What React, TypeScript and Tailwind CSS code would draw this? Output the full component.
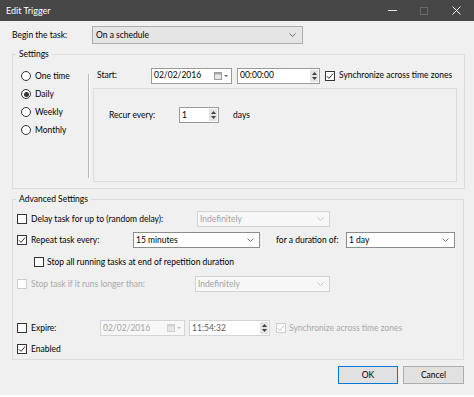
import React from "react"

function Check({ checked = false, disabled = false }: { checked?: boolean; disabled?: boolean }) {
  return (
    <span
      className={`flex h-[10px] w-[10px] shrink-0 items-center justify-center border bg-white ${
        disabled ? "border-[#cccccc]" : "border-[#333333]"
      }`}
    >
      {checked && (
        <svg width="8" height="8" viewBox="0 0 8 8">
          <path d="M0.8 4.2 L3 6.4 L7.2 1.4" fill="none" stroke={disabled ? "#bcbcbc" : "#333"} strokeWidth="1" />
        </svg>
      )}
    </span>
  )
}

function Radio({ checked = false }: { checked?: boolean }) {
  return (
    <span className="flex h-[10px] w-[10px] shrink-0 items-center justify-center rounded-full border border-[#333333] bg-white">
      {checked && <span className="h-[5px] w-[5px] rounded-full bg-[#333333]" />}
    </span>
  )
}

function Chevron({ color = "#707070" }: { color?: string }) {
  return (
    <svg width="7" height="4" viewBox="0 0 7 4" className="shrink-0">
      <path d="M0.5 0.5 L3.5 3.5 L6.5 0.5" fill="none" stroke={color} strokeWidth="1" />
    </svg>
  )
}

function Combo({ text, w, kind }: { text: string; w: string; kind: "button" | "edit" | "disabled" }) {
  const box =
    kind === "button"
      ? "bg-[#e5e5e5] border-[#acacac]"
      : kind === "edit"
      ? "bg-white border-[#8c8c8c]"
      : "bg-[#f7f7f7] border-[#d4d4d4] text-[#a3a3a3]"
  return (
    <div className={`flex h-[16px] shrink-0 items-center justify-between border pl-[2px] pr-[5px] ${box} ${w}`}>
      <span>{text}</span>
      <Chevron color={kind === "disabled" ? "#c2c2c2" : "#707070"} />
    </div>
  )
}

function Spinner({ disabled = false }: { disabled?: boolean }) {
  const c = disabled ? "#b0b0b0" : "#404040"
  return (
    <span className="flex h-[12px] w-[8px] shrink-0 flex-col items-center justify-center gap-[2px] bg-[#e3e3e3]">
      <svg width="5" height="3" viewBox="0 0 5 3">
        <path d="M0 3 L2.5 0 L5 3 Z" fill={c} />
      </svg>
      <svg width="5" height="3" viewBox="0 0 5 3">
        <path d="M0 0 L2.5 3 L5 0 Z" fill={c} />
      </svg>
    </span>
  )
}

function DateBox({ w, disabled = false }: { w: string; disabled?: boolean }) {
  return (
    <div
      className={`flex h-[16px] shrink-0 items-center justify-between border pl-[2px] pr-[3px] ${w} ${
        disabled ? "border-[#d4d4d4] bg-[#f7f7f7] text-[#a3a3a3]" : "border-[#9a9a9a] bg-white"
      }`}
    >
      <span>02/02/2016</span>
      <span className="flex items-center gap-[2px]">
        <svg width="8" height="8" viewBox="0 0 8 8">
          <rect x="0.5" y="0.5" width="7" height="7" fill="#e8e8e8" stroke={disabled ? "#cfcfcf" : "#9c9c9c"} />
          <rect x="1" y="1" width="6" height="1.5" fill={disabled ? "#d0d0d0" : "#a8a8a8"} />
        </svg>
        <svg width="4" height="2" viewBox="0 0 4 2">
          <path d="M0 0 L2 2 L4 0 Z" fill={disabled ? "#c0c0c0" : "#606060"} />
        </svg>
      </span>
    </div>
  )
}

function TimeBox({ text, w, disabled = false }: { text: string; w: string; disabled?: boolean }) {
  return (
    <div
      className={`flex h-[16px] shrink-0 items-center justify-between border pl-[2px] pr-[1px] ${w} ${
        disabled ? "border-[#d4d4d4] bg-white text-[#5a5a5a]" : "border-[#9a9a9a] bg-white"
      }`}
    >
      <span>{text}</span>
      <Spinner />
    </div>
  )
}

export default function App() {
  return (
    <div className="h-[397px] w-[474px] bg-white font-['Lato','Liberation_Sans',sans-serif] text-[8.5px] leading-none text-black">
      <div className="flex h-[395px] flex-col bg-[#f0f0f0]">
        {/* title bar */}
        <div className="flex h-[21px] shrink-0 items-center bg-[#474747] pl-[6px] text-[9px] text-white">
          <span className="flex-1">Edit Trigger</span>
          <div className="flex items-center pr-[2px]">
            <span className="flex h-[21px] w-[32px] items-center justify-center">
              <span className="h-px w-[9px] bg-[#e0e0e0]" />
            </span>
            <span className="flex h-[21px] w-[32px] items-center justify-center">
              <span className="h-[8px] w-[8px] border border-[#6c6c6c]" />
            </span>
            <span className="flex h-[21px] w-[32px] items-center justify-center">
              <svg width="9" height="9" viewBox="0 0 9 9">
                <path d="M0.5 0.5 L8.5 8.5 M8.5 0.5 L0.5 8.5" stroke="#ffffff" strokeWidth="1" />
              </svg>
            </span>
          </div>
        </div>

        {/* begin the task */}
        <div className="mt-[5px] flex h-[18px] items-center pl-[12px]">
          <span className="w-[80px]">Begin the task:</span>
          <div className="flex h-[18px] w-[211px] items-center justify-between border border-[#acacac] bg-[#e5e5e5] pl-[3px] pr-[6px]">
            <span>On a schedule</span>
            <Chevron />
          </div>
        </div>

        {/* settings */}
        <fieldset className="ml-[12px] mt-[2px] w-[453px] border border-[#dcdcdc]">
          <legend className="ml-[3px] px-[3px] leading-[16px]">Settings</legend>
          <div className="flex">
            <div className="flex w-[75px] flex-col pl-[8px] pt-[5px]">
              {[
                ["One time", false],
                ["Daily", true],
                ["Weekly", false],
                ["Monthly", false],
              ].map(([label, on]) => (
                <label key={label as string} className="flex h-[18px] items-center gap-[4px]">
                  <Radio checked={on as boolean} />
                  <span>{label}</span>
                </label>
              ))}
            </div>
            <div className="mt-[12px] h-[104px] w-[2px] border-l border-r border-l-[#b9b9b9] border-r-white" />
            <div className="ml-[3px] flex flex-col pb-[6px] pt-[5px]">
              <div className="flex h-[17px] items-center pl-[4px]">
                <span className="w-[54px]">Start:</span>
                <DateBox w="w-[81px]" />
                <div className="ml-[5px]">
                  <TimeBox text="00:00:00" w="w-[83px]" />
                </div>
                <span className="ml-[5px]">
                  <Check checked />
                </span>
                <span className="ml-[4px]">Synchronize across time zones</span>
              </div>
              <div className="mt-[4px] h-[94px] w-[364px] border border-[#dcdcdc] pl-[15px] pt-[18px]">
                <div className="flex h-[16px] items-center">
                  <span className="w-[70px]">Recur every:</span>
                  <div className="flex h-[16px] w-[40px] items-center justify-between border border-[#9a9a9a] bg-white pl-[2px] pr-[1px]">
                    <span>1</span>
                    <Spinner />
                  </div>
                  <span className="ml-[14px]">days</span>
                </div>
              </div>
            </div>
          </div>
        </fieldset>

        {/* advanced settings */}
        <fieldset className="ml-[12px] mt-[2px] w-[452px] border border-[#dcdcdc]">
          <legend className="ml-[3px] px-[3px] leading-[16px]">Advanced Settings</legend>
          <div className="flex flex-col pb-[1px] pl-[4px] pt-[3px]">
            <div className="flex h-[18px] items-center">
              <label className="flex w-[180px] items-center gap-[4px]">
                <Check />
                <span>Delay task for up to (random delay):</span>
              </label>
              <Combo text="Indefinitely" w="w-[133px]" kind="disabled" />
            </div>
            <div className="mt-[3px] flex h-[18px] items-center">
              <label className="flex w-[116px] items-center gap-[4px]">
                <Check checked />
                <span>Repeat task every:</span>
              </label>
              <Combo text="15 minutes" w="w-[127px]" kind="edit" />
              <span className="ml-[16px] w-[70px]">for a duration of:</span>
              <Combo text="1 day" w="w-[109px]" kind="edit" />
            </div>
            <div className="mt-[4px] flex h-[18px] items-center gap-[3px] pl-[17px]">
              <Check />
              <span>Stop all running tasks at end of repetition duration</span>
            </div>
            <div className="mt-[4px] flex h-[18px] items-center">
              <label className="flex w-[178px] items-center gap-[4px] text-[#a8a8a8]">
                <Check disabled />
                <span>Stop task if it runs longer than:</span>
              </label>
              <Combo text="Indefinitely" w="w-[135px]" kind="disabled" />
            </div>
            <div className="mt-[26px] flex h-[18px] items-center">
              <label className="flex w-[83px] items-center gap-[4px]">
                <Check />
                <span>Expire:</span>
              </label>
              <DateBox w="w-[85px]" disabled />
              <div className="ml-[4px]">
                <TimeBox text="11:54:32" w="w-[81px]" disabled />
              </div>
              <span className="ml-[6px]">
                <Check checked disabled />
              </span>
              <span className="ml-[3px] text-[#a8a8a8]">Synchronize across time zones</span>
            </div>
            <div className="mt-[3px] flex h-[18px] items-center gap-[4px]">
              <Check checked />
              <span>Enabled</span>
            </div>
          </div>
        </fieldset>

        {/* buttons */}
        <div className="mt-[6px] flex justify-end gap-[5px] pr-[10px]">
          <button className="flex h-[18px] w-[60px] items-center justify-center border border-[#0078d7] bg-[#e1e1e1]">
            OK
          </button>
          <button className="flex h-[18px] w-[61px] items-center justify-center border border-[#adadad] bg-[#e1e1e1]">
            Cancel
          </button>
        </div>
      </div>
    </div>
  )
}
